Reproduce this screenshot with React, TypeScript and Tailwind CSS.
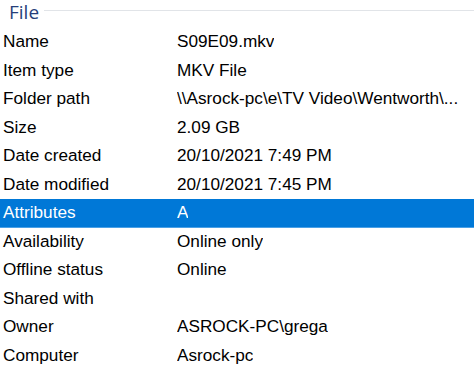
const rows: [string, string][] = [
  ["Name", "S09E09.mkv"],
  ["Item type", "MKV File"],
  ["Folder path", "\\\\Asrock-pc\\e\\TV Video\\Wentworth\\..."],
  ["Size", "2.09 GB"],
  ["Date created", "20/10/2021 7:49 PM"],
  ["Date modified", "20/10/2021 7:45 PM"],
  ["Attributes", "A"],
  ["Availability", "Online only"],
  ["Offline status", "Online"],
  ["Shared with", ""],
  ["Owner", "ASROCK-PC\\grega"],
  ["Computer", "Asrock-pc"],
];

export default function App() {
  return (
    <div
      className="w-[474px] h-[388px] bg-white overflow-hidden text-[17.2px] text-black"
      style={{ fontFamily: '"Liberation Sans", Arial, sans-serif' }}
    >
      <div className="flex items-center h-[24px] pl-[9px]">
        <span className="text-[19px] text-[#263f7a] leading-[24px]" style={{ fontFamily: '"Open Sans", "Liberation Sans", sans-serif' }}>
          File
        </span>
        <div className="flex-1 h-px bg-[#e1e4e8] ml-[5px] -mt-[3px]" />
      </div>
      <div className="pt-[4px]">
        {rows.map(([label, value]) => {
          const selected = label === "Attributes";
          return (
            <div
              key={label}
              className={
                "flex items-center h-[28.5px] whitespace-nowrap " +
                (selected ? "bg-[#0078d7] text-white border-b border-[#4aa0e6]" : "")
              }
            >
              <span className="w-[177px] pl-[3px] shrink-0">{label}</span>
              <span className="truncate">{value}</span>
            </div>
          );
        })}
      </div>
    </div>
  );
}
